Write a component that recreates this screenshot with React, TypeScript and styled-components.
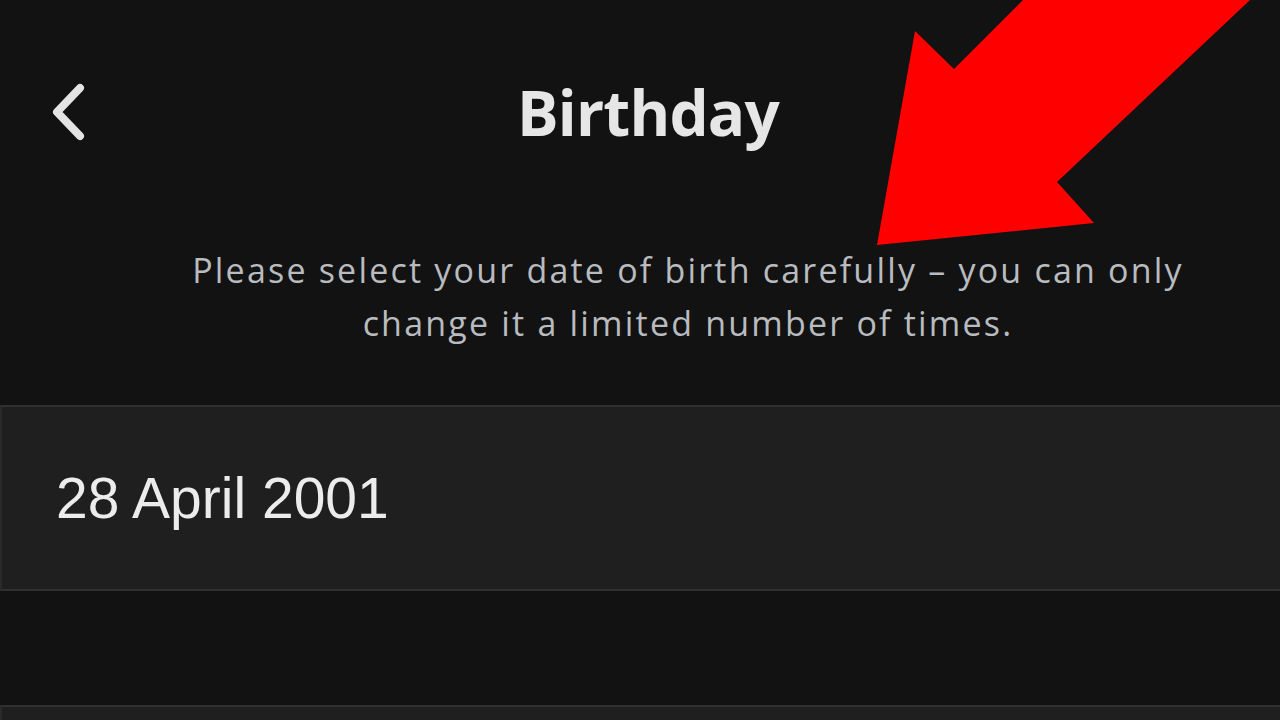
import React from "react";
import styled, { createGlobalStyle } from "styled-components";

const GlobalStyle = createGlobalStyle`
  html, body {
    margin: 0;
    padding: 0;
    background: #121212;
  }
  * {
    box-sizing: border-box;
  }
`;

const Page = styled.div`
  position: relative;
  width: 1280px;
  height: 720px;
  overflow: hidden;
  background: #121212;
  font-family: "Open Sans", "Noto Sans", sans-serif;
`;

const Header = styled.header`
  display: grid;
  grid-template-columns: 1fr auto 1fr;
  align-items: center;
  height: 224px;
  padding-left: 16px;
`;

const BackButton = styled.button`
  justify-self: start;
  display: flex;
  align-items: center;
  justify-content: center;
  width: 60px;
  height: 70px;
  margin-left: 24px;
  padding: 0;
  border: none;
  background: transparent;
  cursor: pointer;
`;

const Title = styled.h1`
  margin: 0;
  font-size: 62px;
  font-weight: 700;
  letter-spacing: -0.8px;
  color: #e6e6e6;
`;

const Notice = styled.p`
  width: 1040px;
  margin: 20px 0 0 168px;
  font-size: 34px;
  line-height: 53px;
  letter-spacing: 2.2px;
  color: #b8bbbf;
  text-align: center;
`;

const Row = styled.div<{ $top: number }>`
  display: flex;
  align-items: center;
  height: 186px;
  margin-top: ${(p) => p.$top}px;
  padding-left: 54px;
  background: #1f1f1f;
  border-top: 2px solid #303030;
  border-bottom: 2px solid #303030;
  border-left: 2px solid #2a2a2a;
`;

const DateText = styled.span`
  font-family: "Liberation Sans", Arial, sans-serif;
  font-size: 57px;
  color: #ececec;
`;

const Arrow = styled.svg`
  position: absolute;
  top: 0;
  left: 0;
  pointer-events: none;
`;

const App: React.FC = () => {
  return (
    <>
      <GlobalStyle />
      <Page>
        <Header>
          <BackButton aria-label="Back">
            <svg width="40" height="60" viewBox="0 0 40 60">
              <path
                d="M30 6 L7 30 L30 54"
                fill="none"
                stroke="#e4e4e4"
                strokeWidth="8"
                strokeLinecap="round"
                strokeLinejoin="round"
              />
            </svg>
          </BackButton>
          <Title>Birthday</Title>
          <div />
        </Header>
        <Notice>
          Please select your date of birth carefully – you can only
          <br />
          change it a limited number of times.
        </Notice>
        <Row $top={55}>
          <DateText>28 April 2001</DateText>
        </Row>
        <Row $top={114} />
        <Arrow width="1280" height="720" viewBox="0 0 1280 720">
          <polygon
            points="877,245 915,31 954,69 1023,0 1250,0 1057,182 1094,223"
            fill="#ff0000"
          />
        </Arrow>
      </Page>
    </>
  );
};

export default App;
